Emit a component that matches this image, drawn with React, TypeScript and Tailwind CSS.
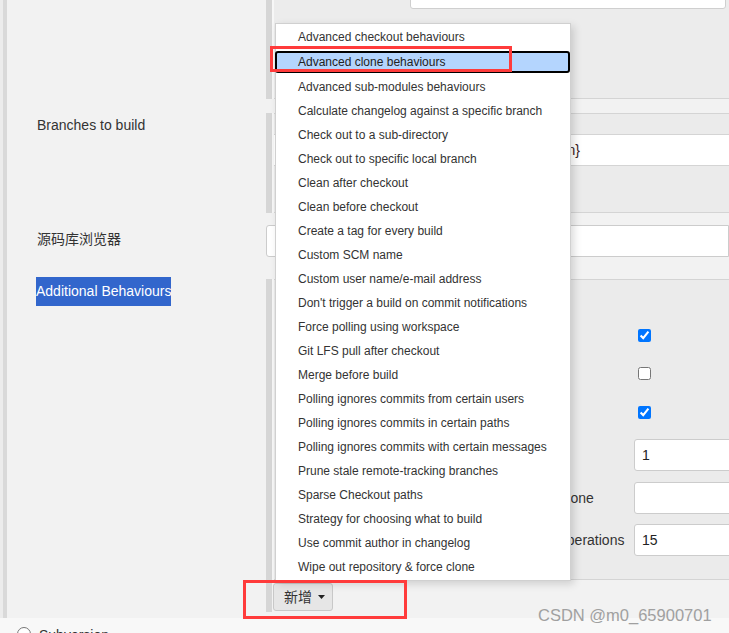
import React from "react";

const items = [
  "Advanced checkout behaviours",
  "Advanced clone behaviours",
  "Advanced sub-modules behaviours",
  "Calculate changelog against a specific branch",
  "Check out to a sub-directory",
  "Check out to specific local branch",
  "Clean after checkout",
  "Clean before checkout",
  "Create a tag for every build",
  "Custom SCM name",
  "Custom user name/e-mail address",
  "Don't trigger a build on commit notifications",
  "Force polling using workspace",
  "Git LFS pull after checkout",
  "Merge before build",
  "Polling ignores commits from certain users",
  "Polling ignores commits in certain paths",
  "Polling ignores commits with certain messages",
  "Prune stale remote-tracking branches",
  "Sparse Checkout paths",
  "Strategy for choosing what to build",
  "Use commit author in changelog",
  "Wipe out repository & force clone",
];

function CheckRow({ label, checked, h }: { label: string; checked: boolean; h: string }) {
  return (
    <div className={`flex items-center ${h}`}>
      <div className="w-[325px] shrink-0 text-[14px] whitespace-nowrap">{label}</div>
      <input
        type="checkbox"
        defaultChecked={checked}
        className="m-0 ml-[4px] w-[13px] h-[13px] accent-[#0075ff]"
      />
    </div>
  );
}

function InputRow({ label, value, mt }: { label: string; value: string; mt: string }) {
  return (
    <div className={`flex items-center h-[32px] ${mt}`}>
      <div className="w-[325px] shrink-0 text-[14px] whitespace-nowrap">{label}</div>
      <div className="w-[200px] shrink-0 h-[32px] bg-white border border-[#cccccc] rounded-[3px] pl-[7px] text-[14px] leading-[30px] text-[#222]">
        {value}
      </div>
    </div>
  );
}

export default function App() {
  return (
    <div className="relative w-[729px] h-[633px] overflow-hidden bg-[#f8f8f8] font-['Liberation_Sans','Noto_Sans_CJK_SC',sans-serif] text-[#333]">
      <div className="flex h-[618px]">
        <div className="w-[3px] shrink-0 bg-[#ececec]" />
        <div className="w-[4px] shrink-0 bg-[#d9d9d9]" />
        <div className="flex-1 min-w-0 flex flex-col bg-[#f2f2f2]">
          {/* row 1 */}
          <div className="flex h-[99px] shrink-0">
            <div className="w-[259px] shrink-0" />
            <div className="w-[6px] shrink-0 bg-[#d6d6d6]" />
            <div className="w-[2px] shrink-0 bg-[#f7f7f7]" />
            <div className="flex-1 bg-[#ececec] border-b border-[#d4d4d4]">
              <div className="-mt-[23px] ml-[136px] w-[316px] h-[32px] bg-white border border-[#cfcfcf] rounded-[3px] pl-[8px] text-[14px] leading-[25px] whitespace-nowrap overflow-hidden">
                git@gitee.com:gig/egg-demo.git
              </div>
            </div>
          </div>
          <div className="h-[14px] shrink-0" />
          {/* row 2 */}
          <div className="flex h-[100px] shrink-0">
            <div className="w-[259px] shrink-0 pl-[30px] pt-[4px] text-[14px] leading-[16px]">Branches to build</div>
            <div className="w-[6px] shrink-0 bg-[#d6d6d6]" />
            <div className="w-[2px] shrink-0 bg-[#f7f7f7]" />
            <div className="flex-1 bg-[#ebebeb] border-y border-[#d4d4d4] pt-[20px]">
              <div className="h-[32px] bg-white border-y border-[#d4d4d4] flex">
                <span className="w-[306px] shrink-0 text-right text-[14px] leading-[30px] text-[#3a2020]">{"${version}"}</span>
              </div>
            </div>
          </div>
          <div className="h-[12px] shrink-0" />
          {/* row 3 */}
          <div className="flex h-[32px] shrink-0">
            <div className="w-[259px] shrink-0 pl-[30px] pb-[4px] flex items-center text-[14px]">源码库浏览器</div>
            <div className="flex-1 bg-white border border-[#cccccc] rounded-l-[3px]" />
          </div>
          <div className="h-[22px] shrink-0" />
          {/* row 4 */}
          <div className="flex h-[333px] shrink-0">
            <div className="w-[259px] shrink-0 pl-[29px]">
              <span className="block w-fit -mt-[2px] bg-[#3266cc] text-white text-[14px] leading-[29px]">
                Additional Behaviours
              </span>
            </div>
            <div className="w-[6px] shrink-0 bg-[#d6d6d6]" />
            <div className="flex-1 flex flex-col">
              <div className="flex h-[301px] shrink-0">
                <div className="w-[2px] shrink-0 bg-[#f7f7f7]" />
                <div className="flex-1 bg-[#ebebeb] border-y border-[#d4d4d4] pl-[35px] pt-[36px]">
                  <CheckRow label="Fetch tags" checked h="h-[38px]" />
                  <CheckRow label="Honor refspec on initial clone" checked={false} h="h-[39px]" />
                  <CheckRow label="Shallow clone" checked h="h-[38px]" />
                  <InputRow label="Shallow clone depth" value="1" mt="mt-[8px]" />
                  <InputRow label="Path of the reference repo to use during clone" value="" mt="mt-[11px]" />
                  <InputRow label="Timeout (in minutes) for clone and fetch operations" value="15" mt="mt-[10px]" />
                </div>
              </div>
              <div className="h-[32px] shrink-0 pl-[1px] pt-[3px]">
                <button className="h-[28px] w-[60px] flex items-center pl-[10px] gap-[6px] bg-[#e6e6e6] border border-[#c8c8c8] rounded-[3px] text-[14px] text-[#333]">
                  <span>新增</span>
                  <svg width="7" height="4" viewBox="0 0 7 4">
                    <path d="M0 0 L7 0 L3.5 4 Z" fill="#222" />
                  </svg>
                </button>
              </div>
            </div>
          </div>
        </div>
      </div>
      {/* bottom radio row */}
      <div className="flex items-start pl-[17px] pt-[9px] gap-[8px]">
        <span className="w-[14px] h-[14px] shrink-0 rounded-full border border-[#767676] bg-white" />
        <span className="text-[14px] leading-[16px]">Subversion</span>
      </div>

      {/* dropdown menu */}
      <div className="absolute left-[275px] top-[23px] w-[296px] h-[558px] bg-white border border-[#d0d0d0] py-[1px] shadow-[3px_3px_8px_rgba(0,0,0,0.15)]">
        {items.map((t, i) =>
          i === 1 ? (
            <div key={t} className="h-[24px]">
              <div className="mt-[2px] h-[22px] -ml-[1px] border-2 border-black rounded-[3px] bg-[#b4d5fe] flex items-center pl-[21px] text-[12px] text-[#222] whitespace-nowrap">
                {t}
              </div>
            </div>
          ) : (
            <div key={t} className="h-[24px] flex items-center pl-[22px] text-[12px] text-[#333] whitespace-nowrap">
              {t}
            </div>
          )
        )}
      </div>

      {/* annotations */}
      <div className="absolute left-[270px] top-[46px] w-[242px] h-[26px] border-[3px] border-[#ff3b3b]" />
      <div className="absolute left-[243px] top-[580px] w-[164px] h-[39px] border-[3px] border-[#ff3b3b]" />

      <div className="absolute left-[538px] top-[605px] text-[16.5px] leading-[20px] text-[#a0a0a0] whitespace-nowrap">
        CSDN @m0_65900701
      </div>
    </div>
  );
}
